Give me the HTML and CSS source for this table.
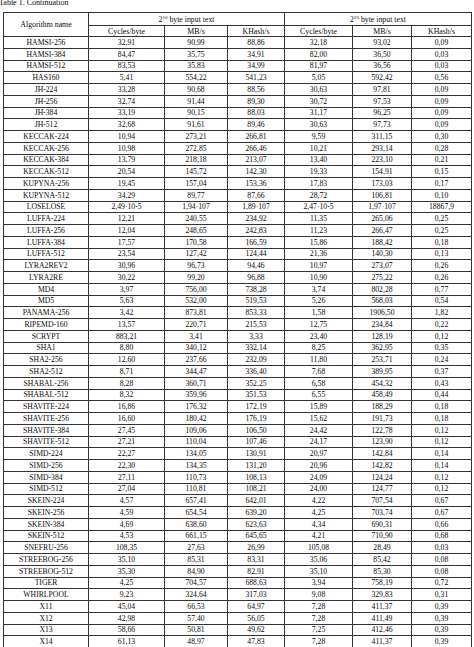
FILE: index.html
```html
<!DOCTYPE html>
<html>
<head>
<meta charset="utf-8">
<link rel="stylesheet" href="styles.css">
</head>
<body>
<div class="caption">Table 1. Continuation</div>
<table class="data">
<colgroup>
<col class="c-name"><col class="c1"><col class="c2"><col class="c3"><col class="c4"><col class="c5"><col class="c6">
</colgroup>
<thead>
<tr class="h1"><th rowspan="2">Algorithm name</th><th colspan="3">2<sup>10</sup> byte input text</th><th colspan="3">2<sup>20</sup> byte input text</th></tr>
<tr class="h2"><th>Cycles/byte</th><th>MB/s</th><th>KHash/s</th><th>Cycles/byte</th><th>MB/s</th><th>KHash/s</th></tr>
</thead>
<tbody>
<tr><td>HAMSI-256</td><td>32,91</td><td>90,99</td><td>88,86</td><td>32,18</td><td>93,02</td><td>0,09</td></tr>
<tr><td>HAMSI-384</td><td>84,47</td><td>35,75</td><td>34,91</td><td>82,00</td><td>36,50</td><td>0,03</td></tr>
<tr><td>HAMSI-512</td><td>83,53</td><td>35,83</td><td>34,99</td><td>81,97</td><td>36,56</td><td>0,03</td></tr>
<tr><td>HAS160</td><td>5,41</td><td>554,22</td><td>541,23</td><td>5,05</td><td>592,42</td><td>0,56</td></tr>
<tr><td>JH-224</td><td>33,28</td><td>90,68</td><td>88,56</td><td>30,63</td><td>97,81</td><td>0,09</td></tr>
<tr><td>JH-256</td><td>32,74</td><td>91,44</td><td>89,30</td><td>30,72</td><td>97,53</td><td>0,09</td></tr>
<tr><td>JH-384</td><td>33,19</td><td>90,15</td><td>88,03</td><td>31,17</td><td>96,25</td><td>0,09</td></tr>
<tr><td>JH-512</td><td>32,68</td><td>91,61</td><td>89,46</td><td>30,63</td><td>97,73</td><td>0,09</td></tr>
<tr><td>KECCAK-224</td><td>10,94</td><td>273,21</td><td>266,81</td><td>9,59</td><td>311,15</td><td>0,30</td></tr>
<tr><td>KECCAK-256</td><td>10,98</td><td>272,85</td><td>266,46</td><td>10,21</td><td>293,14</td><td>0,28</td></tr>
<tr><td>KECCAK-384</td><td>13,79</td><td>218,18</td><td>213,07</td><td>13,40</td><td>223,10</td><td>0,21</td></tr>
<tr><td>KECCAK-512</td><td>20,54</td><td>145,72</td><td>142,30</td><td>19,33</td><td>154,91</td><td>0,15</td></tr>
<tr><td>KUPYNA-256</td><td>19,45</td><td>157,04</td><td>153,36</td><td>17,83</td><td>173,03</td><td>0,17</td></tr>
<tr><td>KUPYNA-512</td><td>34,29</td><td>89,77</td><td>87,66</td><td>28,72</td><td>106,81</td><td>0,10</td></tr>
<tr><td>LOSELOSE</td><td>2,49·10-5</td><td>1,94·107</td><td>1,89·107</td><td>2,47·10-5</td><td>1,97·107</td><td>18867,9</td></tr>
<tr><td>LUFFA-224</td><td>12,21</td><td>240,55</td><td>234,92</td><td>11,35</td><td>265,06</td><td>0,25</td></tr>
<tr><td>LUFFA-256</td><td>12,04</td><td>248,65</td><td>242,83</td><td>11,23</td><td>266,47</td><td>0,25</td></tr>
<tr><td>LUFFA-384</td><td>17,57</td><td>170,58</td><td>166,59</td><td>15,86</td><td>188,42</td><td>0,18</td></tr>
<tr><td>LUFFA-512</td><td>23,54</td><td>127,42</td><td>124,44</td><td>21,36</td><td>140,30</td><td>0,13</td></tr>
<tr><td>LYRA2REV2</td><td>30,96</td><td>96,73</td><td>94,46</td><td>10,97</td><td>273,07</td><td>0,26</td></tr>
<tr><td>LYRA2RE</td><td>30,22</td><td>99,20</td><td>96,88</td><td>10,90</td><td>275,22</td><td>0,26</td></tr>
<tr><td>MD4</td><td>3,97</td><td>756,00</td><td>738,28</td><td>3,74</td><td>802,28</td><td>0,77</td></tr>
<tr><td>MD5</td><td>5,63</td><td>532,00</td><td>519,53</td><td>5,26</td><td>568,03</td><td>0,54</td></tr>
<tr><td>PANAMA-256</td><td>3,42</td><td>873,81</td><td>853,33</td><td>1,58</td><td>1906,50</td><td>1,82</td></tr>
<tr><td>RIPEMD-160</td><td>13,57</td><td>220,71</td><td>215,53</td><td>12,75</td><td>234,84</td><td>0,22</td></tr>
<tr><td>SCRYPT</td><td>883,21</td><td>3,41</td><td>3,33</td><td>23,40</td><td>128,19</td><td>0,12</td></tr>
<tr><td>SHA1</td><td>8,80</td><td>340,12</td><td>332,14</td><td>8,25</td><td>362,95</td><td>0,35</td></tr>
<tr><td>SHA2-256</td><td>12,60</td><td>237,66</td><td>232,09</td><td>11,80</td><td>253,71</td><td>0,24</td></tr>
<tr><td>SHA2-512</td><td>8,71</td><td>344,47</td><td>336,40</td><td>7,68</td><td>389,95</td><td>0,37</td></tr>
<tr><td>SHABAL-256</td><td>8,28</td><td>360,71</td><td>352,25</td><td>6,58</td><td>454,32</td><td>0,43</td></tr>
<tr><td>SHABAL-512</td><td>8,32</td><td>359,96</td><td>351,53</td><td>6,55</td><td>458,49</td><td>0,44</td></tr>
<tr><td>SHAVITE-224</td><td>16,86</td><td>176,32</td><td>172,19</td><td>15,89</td><td>188,29</td><td>0,18</td></tr>
<tr><td>SHAVITE-256</td><td>16,60</td><td>180,42</td><td>176,19</td><td>15,62</td><td>191,73</td><td>0,18</td></tr>
<tr><td>SHAVITE-384</td><td>27,45</td><td>109,06</td><td>106,50</td><td>24,42</td><td>122,78</td><td>0,12</td></tr>
<tr><td>SHAVITE-512</td><td>27,21</td><td>110,04</td><td>107,46</td><td>24,17</td><td>123,90</td><td>0,12</td></tr>
<tr><td>SIMD-224</td><td>22,27</td><td>134,05</td><td>130,91</td><td>20,97</td><td>142,84</td><td>0,14</td></tr>
<tr><td>SIMD-256</td><td>22,30</td><td>134,35</td><td>131,20</td><td>20,96</td><td>142,82</td><td>0,14</td></tr>
<tr><td>SIMD-384</td><td>27,11</td><td>110,73</td><td>108,13</td><td>24,09</td><td>124,24</td><td>0,12</td></tr>
<tr><td>SIMD-512</td><td>27,04</td><td>110,81</td><td>108,21</td><td>24,00</td><td>124,77</td><td>0,12</td></tr>
<tr><td>SKEIN-224</td><td>4,57</td><td>657,41</td><td>642,01</td><td>4,22</td><td>707,54</td><td>0,67</td></tr>
<tr><td>SKEIN-256</td><td>4,59</td><td>654,54</td><td>639,20</td><td>4,25</td><td>703,74</td><td>0,67</td></tr>
<tr><td>SKEIN-384</td><td>4,69</td><td>638,60</td><td>623,63</td><td>4,34</td><td>690,31</td><td>0,66</td></tr>
<tr><td>SKEIN-512</td><td>4,53</td><td>661,15</td><td>645,65</td><td>4,21</td><td>710,90</td><td>0,68</td></tr>
<tr><td>SNEFRU-256</td><td>108,35</td><td>27,63</td><td>26,99</td><td>105,08</td><td>28,49</td><td>0,03</td></tr>
<tr><td>STREEBOG-256</td><td>35,10</td><td>85,31</td><td>83,31</td><td>35,06</td><td>85,42</td><td>0,08</td></tr>
<tr><td>STREEBOG-512</td><td>35,30</td><td>84,90</td><td>82,91</td><td>35,10</td><td>85,30</td><td>0,08</td></tr>
<tr><td>TIGER</td><td>4,25</td><td>704,57</td><td>688,63</td><td>3,94</td><td>758,19</td><td>0,72</td></tr>
<tr><td>WHIRLPOOL</td><td>9,23</td><td>324,64</td><td>317,03</td><td>9,08</td><td>329,83</td><td>0,31</td></tr>
<tr><td>X11</td><td>45,04</td><td>66,53</td><td>64,97</td><td>7,28</td><td>411,37</td><td>0,39</td></tr>
<tr><td>X12</td><td>42,98</td><td>57,40</td><td>56,05</td><td>7,28</td><td>411,49</td><td>0,39</td></tr>
<tr><td>X13</td><td>58,66</td><td>50,81</td><td>49,62</td><td>7,25</td><td>412,46</td><td>0,39</td></tr>
<tr><td>X14</td><td>61,13</td><td>48,97</td><td>47,83</td><td>7,28</td><td>411,37</td><td>0,39</td></tr>
</tbody>
</table>
</body>
</html>
```
FILE: styles.css
```css
html, body {
  margin: 0;
  padding: 0;
  background: #fff;
}
body {
  font-family: "Liberation Serif", "Times New Roman", serif;
  color: #0a0a0a;
  width: 474px;
  height: 647px;
  overflow: hidden;
}
.caption {
  font-size: 8px;
  line-height: 9px;
  height: 9px;
  margin: -2px 0 5px -1px;
}
.data {
  margin-left: 3px;
  width: 468px;
  border-collapse: collapse;
  table-layout: fixed;
  font-size: 7.7px;
}
.c-name { width: 85px; }
.c1 { width: 76px; }
.c2 { width: 63px; }
.c3 { width: 57px; }
.c4 { width: 68px; }
.c5 { width: 59px; }
.c6 { width: 60px; }
.data th, .data td {
  border: 1px solid #333;
  padding: 0;
  text-align: center;
  vertical-align: middle;
  font-weight: normal;
  line-height: 9px;
  white-space: nowrap;
  overflow: hidden;
}
.data th {
  font-size: 7.8px;
}
.data sup {
  font-size: 5px;
  line-height: 0;
  vertical-align: 3px;
}
.h1 { height: 13px; }
.h2 { height: 11px; }
.data tbody tr { height: 11.76px; }
```
